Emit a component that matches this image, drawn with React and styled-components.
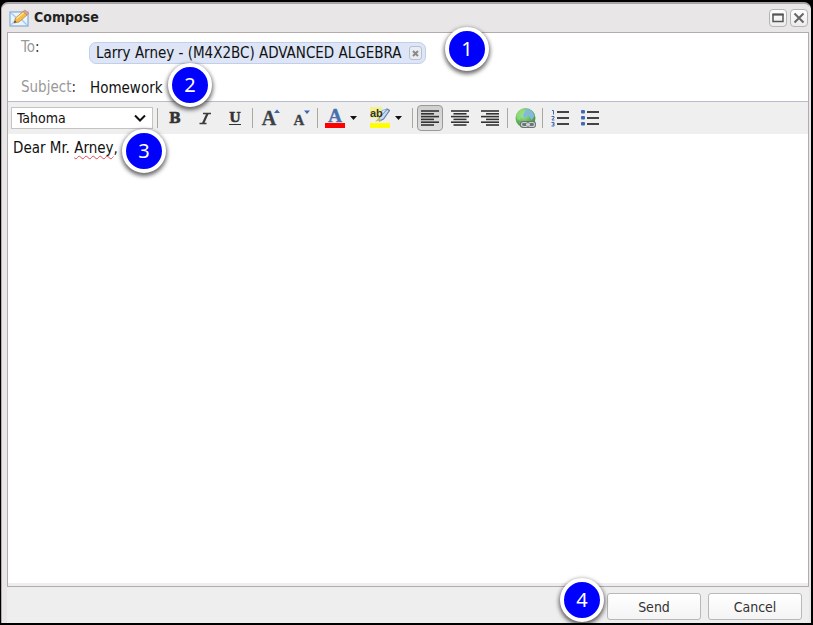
import React from "react";
import styled, { createGlobalStyle } from "styled-components";

const GlobalStyle = createGlobalStyle`
  *, *::before, *::after { box-sizing: border-box; }
  body { margin: 0; background: #000; font-family: "DejaVu Sans Condensed", "Noto Sans", sans-serif; font-size: 15px; color: #111; }
  button, input, select { font: inherit; color: inherit; }
`;

const Page = styled.div`
  min-height: 100vh;
  display: flex;
  padding: 2px 2px 2px 1px;
`;

const Window = styled.section`
  flex: 1;
  min-width: 0;
  display: flex;
  flex-direction: column;
  padding: 0 1px 0 5px;
  background: #e8e6e6;
  border: 1px solid #b3abae;
  border-top: 2px solid #a8a4a6;
  border-right-color: #e8e6e6;
  border-bottom: 0;
  border-radius: 7px 7px 0 0;
`;

const TitleBar = styled.header`
  display: flex;
  align-items: center;
  gap: 4px;
  height: 28px;
  padding: 0 1px 1px 2px;
`;

const Title = styled.h1`
  flex: 1;
  margin: 0;
  padding-bottom: 2px;
  font-size: 14px;
  line-height: 20px;
  font-weight: 700;
  color: #222;
`;

const WindowButton = styled.button`
  display: grid;
  place-items: center;
  width: 18px;
  height: 18px;
  padding: 0;
  border: 1px solid #b5b5b5;
  border-radius: 4px;
  background: linear-gradient(#fff, #ececec);
`;

const WindowButtons = styled.div`
  display: flex;
  gap: 3px;
`;

const Panel = styled.div`
  flex: 1;
  display: flex;
  flex-direction: column;
  border: 1px solid #b3abae;
  background: #fff;
`;

const Fields = styled.div`
  display: grid;
  grid-template-rows: 40px 28px;
  border-bottom: 1px solid #b9bdcb;
`;

const Field = styled.div`
  display: flex;
  align-items: center;
  padding-left: 13px;
`;

const Label = styled.label`
  flex: none;
  width: ${(p) => p.$width}px;
  line-height: 20px;
  color: #999;
  align-self: ${(p) => (p.$top ? "flex-start" : "center")};
  padding-top: ${(p) => (p.$top ? 4 : 0)}px;
`;

const Colon = styled.span`
  color: #333;
`;

const Anchor = styled.div`
  position: relative;
  display: flex;
`;

const Recipient = styled.div`
  display: flex;
  align-items: center;
  gap: 7px;
  height: 22px;
  padding: 0 3px 0 6px;
  border: 1px solid #c1cfea;
  border-radius: 7px;
  background: #dde5f6;
  line-height: 20px;
  white-space: nowrap;
`;

const RemoveButton = styled.button`
  display: grid;
  place-items: center;
  width: 13px;
  height: 14px;
  padding: 0;
  border: 1px solid #b9c0cc;
  border-radius: 3px;
  background: #e9ecf2;
`;

const SubjectInput = styled.input`
  width: 76px;
  height: 24px;
  padding: 2px 0 0;
  border: 0;
  outline: 0;
  background: transparent;
`;

const Step = styled.span`
  position: absolute;
  z-index: 1;
  left: ${(p) => p.$left}px;
  top: ${(p) => p.$top}px;
  display: grid;
  place-items: center;
  width: 44px;
  height: 44px;
  border: 4px solid #fff;
  border-radius: 50%;
  background: #00f;
  box-shadow: 0 2px 4px 1px rgba(0, 0, 0, 0.6);
  color: #fff;
  font-family: "Noto Sans", sans-serif;
  font-size: 20px;
  line-height: 24px;
`;

const Toolbar = styled.div`
  display: flex;
  align-items: center;
  gap: 4px;
  height: 32px;
  padding: 0 3px;
  background: #efefef;
`;

const FontPicker = styled.div`
  display: grid;
  grid-template-columns: 1fr 18px;
  align-items: center;
  width: 142px;
  height: 22px;
  border: 1px solid #c4c4c4;
  background: #fff;
`;

const FontSelect = styled.select`
  grid-area: 1 / 1 / 2 / 3;
  appearance: none;
  height: 20px;
  padding: 0 20px 0 5px;
  border: 0;
  background: transparent;
  font-size: 14px;
  line-height: 20px;
`;

const SelectArrow = styled.svg`
  grid-area: 1 / 2;
  pointer-events: none;
`;

const Separator = styled.span`
  width: 1px;
  height: 20px;
  background: #aaa9a0;
`;

const Tool = styled.button`
  flex: none;
  display: flex;
  align-items: center;
  justify-content: ${(p) => (p.$menu ? "flex-start" : "center")};
  gap: 5px;
  width: ${(p) => (p.$menu ? 41 : 26)}px;
  height: 26px;
  padding: 0 0 0 ${(p) => (p.$menu ? 2 : 0)}px;
  border: 1px solid ${(p) => (p.$active ? "#999" : "transparent")};
  border-radius: 4px;
  background: ${(p) => (p.$active ? "linear-gradient(#cfcfcf, #dedede)" : "transparent")};
`;

const Editor = styled.div`
  flex: 1;
  padding: 4px 5px;
  outline: 0;
  line-height: 20px;
  font-size: 15px;
  border-bottom: 3px solid #efeded;
`;

const Misspelled = styled.span`
  text-decoration: underline wavy #e34850 1px;
  text-underline-offset: 2px;
  text-decoration-skip-ink: none;
`;

const Footer = styled.footer`
  display: flex;
  justify-content: flex-end;
  gap: 7px;
  padding: 6px 7px 3px;
  background: #eee;
`;

const ActionButton = styled.button`
  width: 94px;
  height: 27px;
  padding: 0;
  border: 1px solid #b8b8b8;
  border-radius: 3px;
  background: linear-gradient(#fff, #f4f4f4);
  color: #333;
  font-size: 14px;
`;

const SERIF = '"Liberation Serif", serif';
const SLAB = '"DejaVu Serif", serif';

const ComposeIcon = () => (
  <svg width="21" height="18" viewBox="0 0 21 18" aria-hidden="true">
    <rect x="1" y="3" width="18" height="14" fill="#e9f4ff" stroke="#6c9bd2" />
    <path d="M2 16l6-6M18 16l-6-6M2 4l8 7 8-7" fill="none" stroke="#a9caee" strokeWidth="1.5" />
    <path d="M5 14l1.500-5L14 2.500l4 3.500-8 7z" fill="#f6bd4b" stroke="#b77b2b" strokeWidth=".7" />
    <path d="M7.500 9.500L15 3.500" stroke="#ffe39a" strokeWidth="1.500" />
    <path d="M14 2.500l2-1.500 4 3.500-2 1.500z" fill="#e3a48c" stroke="#a98a70" strokeWidth=".6" />
    <path d="M5 14l1-2.500 1.500 1.500z" fill="#444" />
  </svg>
);

const LINE_START = { left: 0, center: 2.5, right: 5 };

const Lines = ({ kind }) => (
  <svg width="18" height="16" viewBox="0 0 18 16" aria-hidden="true">
    {[0, 1, 2, 3, 4, 5].map((i) => (
      <rect
        key={i}
        x={i % 2 ? LINE_START[kind] : 0}
        y={i * 2.8 + 0.2}
        width={i % 2 ? 13 : 18}
        height="1.600"
        fill="#333"
      />
    ))}
  </svg>
);

const Glyph = ({ char, underline }) => (
  <svg width="18" height="18" viewBox="0 0 18 18" aria-hidden="true">
    <text
      x="9"
      y={underline ? 13 : 14}
      textAnchor="middle"
      fontFamily={SLAB}
      fontSize={underline ? 13 : 14}
      fontWeight="700"
      fill="#333"
      stroke="#333"
      strokeWidth=".5"
    >
      {char}
    </text>
    {underline && <path d="M3 15.500h12" stroke="#333" />}
  </svg>
);

const ItalicIcon = () => (
  <svg width="18" height="18" viewBox="0 0 18 18" aria-hidden="true">
    <g fill="none" stroke="#3c3c3c">
      <path d="M7 4.500h8M3.500 14.500h7" strokeWidth="1.400" />
      <path d="M11.500 4.500l-4.500 10" strokeWidth="2.200" />
    </g>
  </svg>
);

const SizeIcon = ({ grow }) => (
  <svg width="20" height="20" viewBox="0 0 20 20" aria-hidden="true">
    <text x="9" y="17" textAnchor="middle" fontFamily={SERIF} fontWeight="700" fontSize={grow ? 20 : 15} fill="#3c4248" stroke="#3c4248" strokeWidth=".3">
      A
    </text>
    <path d={grow ? "M14 5h6l-3-3.500z" : "M14 2.500h6l-3 3.500z"} fill="#3d63b5" />
  </svg>
);

const Caret = () => (
  <svg width="7" height="4" viewBox="0 0 7 4" aria-hidden="true">
    <path d="M0 0h7L3.500 4z" fill="#111" />
  </svg>
);

const ColorIcon = () => (
  <svg width="20" height="24" viewBox="0 0 20 24" aria-hidden="true">
    <text x="10" y="16" textAnchor="middle" fontFamily={SERIF} fontWeight="700" fontSize="19" fill="#4770ad" stroke="#4770ad" strokeWidth=".4">
      A
    </text>
    <rect y="17" width="20" height="5" fill="#f00" />
  </svg>
);

const HighlightIcon = () => (
  <svg width="20" height="24" viewBox="0 0 20 24" aria-hidden="true">
    <rect y="1" width="12" height="11" fill="#f4f08a" />
    <path d="M17 3l2.500 1.500-6 8.500-4 2-1-2 2-3z" fill="#c9daef" stroke="#5d7fae" strokeWidth="1.200" />
    <path d="M12 4.500l5-1.500-6 7z" fill="#e7f0fa" stroke="#7f9dc6" strokeWidth=".8" />
    <path d="M5 15.500l4-4 2.500 3z" fill="#cfbb58" />
    <text x="0" y="11" fontFamily='"Liberation Sans", sans-serif' fontSize="11" fontWeight="700" fill="#333">
      ab
    </text>
    <rect y="17" width="20" height="5" fill="#ff0" />
  </svg>
);

const GlobeIcon = () => (
  <svg width="22" height="22" viewBox="0 0 22 22" aria-hidden="true">
    <defs>
      <radialGradient id="globe" cx=".38" cy=".3" r=".8">
        <stop offset="0" stopColor="#b8eda6" />
        <stop offset=".55" stopColor="#5fb65a" />
        <stop offset="1" stopColor="#38804c" />
      </radialGradient>
    </defs>
    <circle cx="11.500" cy="11" r="10" fill="url(#globe)" />
    <path d="M13 2c4 0 6 3 7.500 7l-3 4-3-5-4 3-2-3z" fill="#84b8dc" />
    <path d="M4 5l4-3 3 2-3 4-2 5-3-1c-1-3 0-5 1-7z" fill="#8edc78" opacity=".8" />
    <rect x="6" y="14" width="16" height="7" rx="3" fill="#6a7573" />
    <g fill="none" stroke="#ccd2d2" strokeWidth="1.200">
      <rect x="7.500" y="15.500" width="6" height="4" rx="2" />
      <rect x="14.500" y="15.500" width="6" height="4" rx="2" />
      <path d="M12 17.500h4" />
    </g>
  </svg>
);

const NUMERALS = ["M1 1.500h1.500v4", "M.5 7.500H3v1.500L1 10.500v.5h2.500", "M.5 13.500H3v3.500H.5M1.500 15.200H3"];

const ListIcon = ({ ordered }) => (
  <svg width="18" height="18" viewBox="0 0 18 18" aria-hidden="true">
    {[3, 9, 15].map((y, i) => (
      <g key={y}>
        <rect x="6" y={y - 1} width="12" height="2" fill="#444" />
        {ordered ? (
          <path d={NUMERALS[i]} fill="none" stroke="#4168b4" />
        ) : (
          <rect x="0" y={y - 2} width="4" height="3.500" rx="1" fill="#4168b4" />
        )}
      </g>
    ))}
  </svg>
);

export default function App() {
  return (
    <Page>
      <GlobalStyle />
      <Window>
        <TitleBar>
          <ComposeIcon />
          <Title>Compose</Title>
          <WindowButtons>
            <WindowButton aria-label="Maximize">
              <svg width="12" height="10" viewBox="0 0 12 10">
                <path d="M1 1.500h10v7H1z" fill="none" stroke="#555" strokeWidth="1.500" />
                <path d="M.5 1.500h11" stroke="#555" strokeWidth="2" />
              </svg>
            </WindowButton>
            <WindowButton aria-label="Close">
              <svg width="12" height="12" viewBox="0 0 12 12">
                <path d="M1.500 1.500l9 9M10.500 1.500l-9 9" stroke="#666" strokeWidth="2" />
              </svg>
            </WindowButton>
          </WindowButtons>
        </TitleBar>
        <Panel>
          <Fields>
            <Field>
              <Label as="span" $width={68} $top>
                To<Colon>:</Colon>
              </Label>
              <Anchor>
                <Recipient>
                  Larry Arney - (M4X2BC) ADVANCED ALGEBRA
                  <RemoveButton aria-label="Remove Larry Arney">
                    <svg width="7" height="7" viewBox="0 0 7 7">
                      <path d="M1 1l5 5M6 1L1 6" stroke="#888" strokeWidth="2" />
                    </svg>
                  </RemoveButton>
                </Recipient>
                <Step $left={356} $top={-15}>1</Step>
              </Anchor>
            </Field>
            <Field>
              <Label htmlFor="subject" $width={69}>
                Subject<Colon>:</Colon>
              </Label>
              <Anchor>
                <SubjectInput id="subject" defaultValue="Homework" />
                <Step $left={78} $top={-12}>2</Step>
              </Anchor>
            </Field>
          </Fields>
          <Toolbar>
            <FontPicker>
              <FontSelect aria-label="Font" defaultValue="Tahoma">
                <option>Tahoma</option>
              </FontSelect>
              <SelectArrow width="12" height="8" viewBox="0 0 12 8" aria-hidden="true">
                <path d="M1 1.500l5 5 5-5" fill="none" stroke="#111" strokeWidth="2" />
              </SelectArrow>
            </FontPicker>
            <Separator />
            <Tool aria-label="Bold"><Glyph char="B" /></Tool>
            <Tool aria-label="Italic"><ItalicIcon /></Tool>
            <Tool aria-label="Underline"><Glyph char="U" underline /></Tool>
            <Separator />
            <Tool aria-label="Grow text"><SizeIcon grow /></Tool>
            <Tool aria-label="Shrink text"><SizeIcon /></Tool>
            <Separator />
            <Tool aria-label="Font color" $menu><ColorIcon /><Caret /></Tool>
            <Tool aria-label="Highlight color" $menu><HighlightIcon /><Caret /></Tool>
            <Separator />
            <Tool aria-label="Align left" aria-pressed="true" $active><Lines kind="left" /></Tool>
            <Tool aria-label="Align center"><Lines kind="center" /></Tool>
            <Tool aria-label="Align right"><Lines kind="right" /></Tool>
            <Separator />
            <Tool aria-label="Insert link"><GlobeIcon /></Tool>
            <Separator />
            <Tool aria-label="Numbered list"><ListIcon ordered /></Tool>
            <Tool aria-label="Bulleted list"><ListIcon /></Tool>
          </Toolbar>
          <Anchor>
            <Step $left={114} $top={-5}>3</Step>
          </Anchor>
          <Editor role="textbox" aria-label="Message" aria-multiline="true" contentEditable suppressContentEditableWarning spellCheck={false}>
            Dear Mr. <Misspelled>Arney</Misspelled>,
          </Editor>
        </Panel>
        <Footer>
          <Anchor>
            <ActionButton>Send</ActionButton>
            <Step $left={-47} $top={-15}>4</Step>
          </Anchor>
          <ActionButton>Cancel</ActionButton>
        </Footer>
      </Window>
    </Page>
  );
}
